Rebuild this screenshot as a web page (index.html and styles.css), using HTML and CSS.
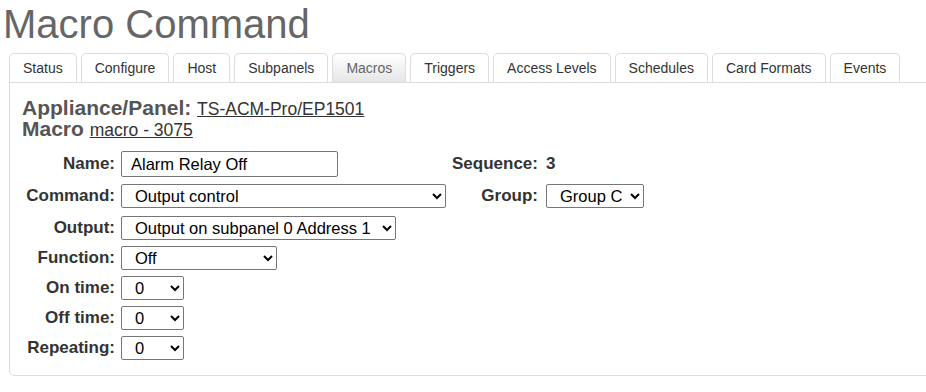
FILE: index.html
```html
<!DOCTYPE html>
<html lang="en">
<head>
  <meta charset="UTF-8">
  <meta name="viewport" content="width=device-width, initial-scale=1.0">
  <title>Macro Command</title>
  <link rel="stylesheet" href="styles.css">
</head>
<body>
  <h1 class="page-title">Macro Command</h1>

  <!-- Tabs -->
  <ul class="tabs">
    <li><a href="#">Status</a></li>
    <li><a href="#">Configure</a></li>
    <li><a href="#">Host</a></li>
    <li><a href="#">Subpanels</a></li>
    <li class="active"><a href="#">Macros</a></li>
    <li><a href="#">Triggers</a></li>
    <li><a href="#">Access Levels</a></li>
    <li><a href="#">Schedules</a></li>
    <li><a href="#">Card Formats</a></li>
    <li><a href="#">Events</a></li>
  </ul>

  <div class="panel">
    <div class="panel-title">Appliance/Panel: <a href="#">TS-ACM-Pro/EP1501</a></div>
    <div class="panel-title">Macro <a href="#">macro - 3075</a></div>

    <form class="macro-form">
      <label class="label" for="name">Name:</label>
      <div class="field"><input type="text" id="name" class="text-input" value="Alarm Relay Off"></div>
      <div class="label label-side">Sequence:</div>
      <div class="value">3</div>

      <label class="label" for="command">Command:</label>
      <div class="field">
        <select id="command" class="select select-command">
          <option>Output control</option>
        </select>
      </div>
      <label class="label label-side" for="group">Group:</label>
      <div class="field">
        <select id="group" class="select select-group">
          <option>Group C</option>
        </select>
      </div>

      <label class="label" for="output">Output:</label>
      <div class="field wide">
        <select id="output" class="select select-output">
          <option>Output on subpanel 0 Address 1</option>
        </select>
      </div>

      <label class="label" for="function">Function:</label>
      <div class="field wide">
        <select id="function" class="select select-function">
          <option>Off</option>
        </select>
      </div>

      <label class="label" for="ontime">On time:</label>
      <div class="field wide">
        <select id="ontime" class="select select-small"><option>0</option></select>
      </div>

      <label class="label" for="offtime">Off time:</label>
      <div class="field wide">
        <select id="offtime" class="select select-small"><option>0</option></select>
      </div>

      <label class="label" for="repeating">Repeating:</label>
      <div class="field wide">
        <select id="repeating" class="select select-small"><option>0</option></select>
      </div>
    </form>
  </div>
</body>
</html>
```

FILE: styles.css
```css
/* General */
html {
  overflow: hidden;
}

body {
  margin: 0;
  font-family: "Liberation Sans", Arial, sans-serif;
  color: #333;
  background-color: #fff;
}

.page-title {
  font-size: 40px;
  font-weight: normal;
  color: #666;
  margin: 2px 0 0 3px;
  line-height: normal;
}

/* Tabs */
.tabs {
  list-style: none;
  margin: 6px 0 0 9px;
  padding: 0;
  display: flex;
  gap: 4px;
}

.tabs li a {
  display: block;
  font-size: 14px;
  line-height: 16px;
  padding: 6px 13px 6px;
  color: #333;
  text-decoration: none;
  border: 1px solid #ddd;
  border-bottom: none;
  border-radius: 5px 5px 0 0;
  background-color: #fff;
}

.tabs li.active a {
  color: #666;
  background: linear-gradient(#fff, #e6e6e6);
}

/* Panel */
.panel {
  margin: 0 -20px 0 9px;
  border: 1px solid #ddd;
  border-radius: 0 0 0 5px;
  padding: 15px 12px 11px;
}

.panel-title {
  font-size: 21px;
  font-weight: bold;
  line-height: 20px;
  color: #555;
}

.panel-title a {
  font-size: 17.5px;
  font-weight: normal;
  color: #333;
}

/* Form */
.macro-form {
  margin-top: 8px;
  display: grid;
  grid-template-columns: 99px 331px 94px auto;
  grid-template-rows: 32px 32px 32px 28px 32px 28px 32px;
  align-items: center;
}

.label {
  font-size: 17px;
  font-weight: bold;
  color: #333;
  text-align: right;
  padding-right: 6px;
  white-space: nowrap;
}

.label-side {
  padding-right: 8px;
}

.value {
  font-size: 17px;
  font-weight: bold;
  color: #333;
}

.field {
  display: flex;
}

.field.wide {
  grid-column: 2 / 5;
}

.text-input {
  box-sizing: border-box;
  width: 217px;
  height: 26px;
  margin: 0;
  padding: 0 9px;
  font-family: inherit;
  font-size: 16.5px;
  color: #000;
  border: 1px solid #767676;
  border-radius: 2px;
}

.select {
  box-sizing: border-box;
  height: 24px;
  margin: 0;
  padding: 0 2px 0 9px;
  font-family: inherit;
  font-size: 16.5px;
  color: #000;
  background-color: #fff;
  border: 1px solid #767676;
  border-radius: 2px;
}

.select-command {
  width: 325px;
}

.select-output {
  width: 275px;
}

.select-function {
  width: 156px;
}

.select-small {
  width: 63px;
}

.select-group {
  width: 98px;
}
```
